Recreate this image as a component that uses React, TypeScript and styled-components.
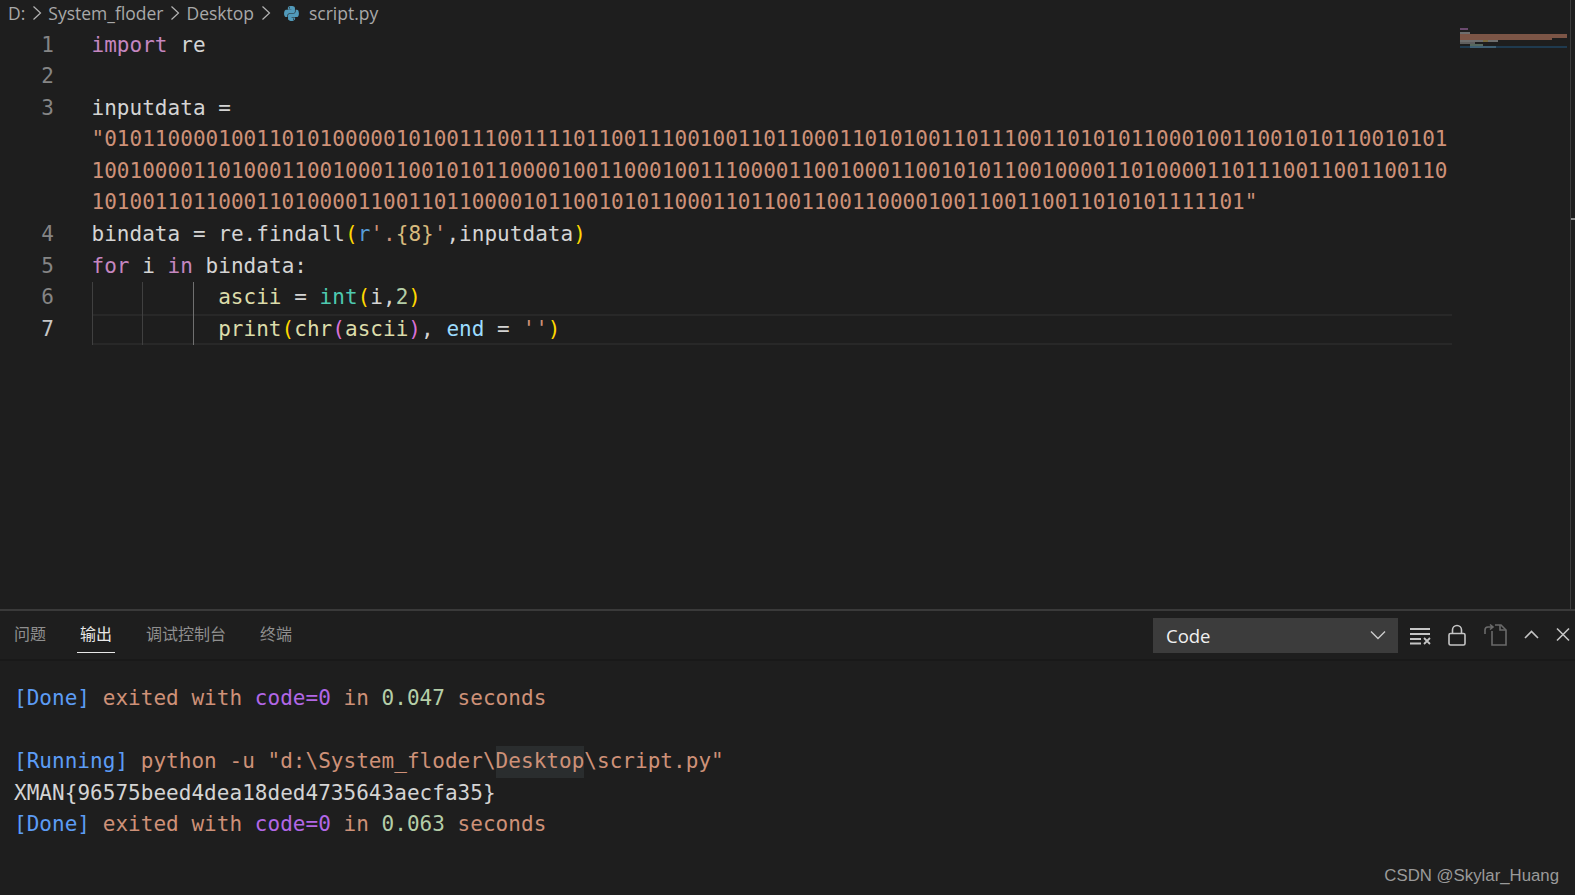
import React from "react";
import styled, { createGlobalStyle } from "styled-components";
import { FaPython } from "react-icons/fa";

const GlobalStyle = createGlobalStyle`
  html, body {
    margin: 0;
    padding: 0;
    background: #1e1e1e;
    overflow: hidden;
  }
`;

const monoFont = `"DejaVu Sans Mono", "Liberation Mono", monospace`;
const uiFont = `"Open Sans", "Noto Sans", sans-serif`;

const Page = styled.div`
  position: relative;
  width: 1575px;
  height: 895px;
  display: flex;
  flex-direction: column;
  background: #1e1e1e;
  overflow: hidden;
`;

const EditorArea = styled.div`
  height: 609px;
  display: flex;
  flex-shrink: 0;
`;

const EditorMain = styled.div`
  width: 1452px;
  flex-shrink: 0;
`;

const Breadcrumbs = styled.div`
  height: 26px;
  margin-bottom: 3.5px;
  display: flex;
  align-items: center;
  padding-left: 8px;
  font-family: ${uiFont};
  font-size: 17.5px;
  color: #a9a9a9;
`;

const Crumb = styled.span``;

const CrumbArrow = styled.svg`
  width: 10px;
  height: 16px;
  margin-left: 7px;
  margin-right: 6px;
  fill: none;
  stroke: #b4b4b4;
  stroke-width: 1.2;
`;

const PythonIcon = styled(FaPython)`
  width: 17px;
  height: 17px;
  margin-left: 6px;
  margin-right: 9px;
  color: #519aba;
`;

const Row = styled.div`
  display: flex;
  min-height: 31.6px;
  line-height: 31.6px;
  font-family: ${monoFont};
  font-size: 21px;
  letter-spacing: 0.03px;
  white-space: pre;
  color: #d4d4d4;
`;

const LineNumber = styled.div<{ $active?: boolean }>`
  width: 54px;
  margin-right: 37.5px;
  flex-shrink: 0;
  text-align: right;
  color: ${(p) => (p.$active ? "#c6c6c6" : "#858585")};
`;

const Code = styled.div`
  display: flex;
  flex-direction: column;
`;

const Indented = styled.div<{ $active?: boolean }>`
  display: flex;
  flex: 1;
  box-shadow: ${(p) =>
    p.$active ? "inset 0 2px 0 #282828, inset 0 -2px 0 #282828" : "none"};
`;

const IndentGuide = styled.div<{ $chars: number }>`
  box-sizing: border-box;
  width: ${(p) => p.$chars * 12.67}px;
  border-left: 1px solid #404040;
`;

const LastGuide = styled(IndentGuide)`
  border-left-color: #707070;
`;

const Tok = styled.span<{ $c: string }>`
  color: ${(p) => p.$c};
`;

const Minimap = styled.svg`
  width: 118px;
  height: 40px;
  flex-shrink: 0;
  margin-top: 20px;
`;

const ScrollTrack = styled.div`
  flex: 1;
  border-left: 1px solid #3c3c3c;
  padding-top: 218px;
`;

const ScrollMark = styled.div`
  height: 2px;
  background: #8c8c8c;
`;

const Panel = styled.div`
  flex: 1;
  display: flex;
  flex-direction: column;
  border-top: 2px solid #3a3a3a;
`;

const PanelHeader = styled.div`
  height: 48px;
  display: flex;
  align-items: center;
  justify-content: space-between;
  border-bottom: 2px solid #191919;
`;

const Tabs = styled.div`
  display: flex;
  align-items: stretch;
  box-sizing: border-box;
  height: 100%;
  padding-left: 14px;
  padding-bottom: 4px;
  gap: 34px;
`;

const Tab = styled.div<{ $active?: boolean }>`
  display: flex;
  align-items: center;
  font-family: "Noto Sans CJK SC", sans-serif;
  font-size: 16px;
  color: ${(p) => (p.$active ? "#e7e7e7" : "#8f8f8f")};
  position: relative;

  ${(p) =>
    p.$active &&
    `&::after {
      content: "";
      position: absolute;
      left: -3px;
      right: -3px;
      bottom: 2px;
      height: 1px;
      background: #e7e7e7;
    }`}
`;

const Actions = styled.div`
  display: flex;
  align-items: center;
  height: 100%;
`;

const Select = styled.div`
  box-sizing: border-box;
  width: 245px;
  height: 35px;
  display: flex;
  align-items: center;
  justify-content: space-between;
  padding: 0 12px 0 13px;
  background: #3c3c3c;
  font-family: ${uiFont};
  font-size: 18.5px;
  color: #f0f0f0;
`;

const ActionIcon = styled.svg<{ $w: number; $l: number; $dim?: boolean }>`
  width: ${(p) => p.$w}px;
  height: 24px;
  margin-left: ${(p) => p.$l}px;
  fill: none;
  stroke: ${(p) => (p.$dim ? "#6a6a6a" : "#c5c5c5")};
  stroke-width: 1.6;
  flex-shrink: 0;
`;

const CloseIcon = styled(ActionIcon)`
  margin-right: 5px;
`;

const Output = styled.div`
  padding-top: 22px;
  padding-left: 14px;
  font-family: ${monoFont};
  font-size: 21px;
  letter-spacing: 0.03px;
  white-space: pre;
  color: #d4d4d4;
`;

const OutputLine = styled.div`
  height: 31.6px;
  line-height: 31.6px;
`;

const Highlight = styled.span`
  display: inline-block;
  background: #2a2d2e;
`;

const Watermark = styled.div`
  position: absolute;
  right: 16px;
  bottom: 9px;
  font-family: "Liberation Sans", Arial, sans-serif;
  font-size: 16.8px;
  color: #9a9a9a;
`;

const C = {
  keyword: "#c586c0",
  string: "#ce9178",
  func: "#dcdcaa",
  type: "#4ec9b0",
  num: "#b5cea8",
  gold: "#ffd700",
  pink: "#da70d6",
  param: "#9cdcfe",
  blue: "#569cd6",
  regex: "#d7ba7d",
  log: "#5c9cf5",
  purple: "#b267e6",
};

const Chevron = () => (
  <CrumbArrow viewBox="0 0 10 16">
    <path d="M1.5 1.5 L8.5 8 L1.5 14.5" />
  </CrumbArrow>
);

const DoneLine = ({ time }: { time: string }) => (
  <OutputLine>
    <Tok $c={C.log}>[Done]</Tok>
    <Tok $c={C.string}> exited with </Tok>
    <Tok $c={C.purple}>code=0</Tok>
    <Tok $c={C.string}> in </Tok>
    <Tok $c={C.num}>{time}</Tok>
    <Tok $c={C.string}> seconds</Tok>
  </OutputLine>
);

const App = () => {
  return (
    <Page>
      <GlobalStyle />
      <EditorArea>
        <EditorMain>
          <Breadcrumbs>
            <Crumb>D:</Crumb>
            <Chevron />
            <Crumb>System_floder</Crumb>
            <Chevron />
            <Crumb>Desktop</Crumb>
            <Chevron />
            <PythonIcon />
            <Crumb>script.py</Crumb>
          </Breadcrumbs>

          <Row>
            <LineNumber>1</LineNumber>
            <Code>
              <div>
                <Tok $c={C.keyword}>import</Tok> re
              </div>
            </Code>
          </Row>
          <Row>
            <LineNumber>2</LineNumber>
          </Row>
          <Row>
            <LineNumber>3</LineNumber>
            <Code>
              <div>inputdata =</div>
              <Tok $c={C.string}>"0101100001001101010000010100111001111011001110010011011000110101001101110011010101100010011001010110010101</Tok>
              <Tok $c={C.string}>10010000110100011001000110010101100001001100010011100001100100011001010110010000110100001101110011001100110</Tok>
              <Tok $c={C.string}>1010011011000110100001100110110000101100101011000110110011001100001001100110011010101111101"</Tok>
            </Code>
          </Row>
          <Row>
            <LineNumber>4</LineNumber>
            <Code>
              <div>
                bindata = re.findall<Tok $c={C.gold}>(</Tok>
                <Tok $c={C.blue}>r</Tok>
                <Tok $c={C.string}>'.</Tok>
                <Tok $c={C.regex}>{"{8}"}</Tok>
                <Tok $c={C.string}>'</Tok>,inputdata
                <Tok $c={C.gold}>)</Tok>
              </div>
            </Code>
          </Row>
          <Row>
            <LineNumber>5</LineNumber>
            <Code>
              <div>
                <Tok $c={C.keyword}>for</Tok> i <Tok $c={C.keyword}>in</Tok> bindata:
              </div>
            </Code>
          </Row>
          <Row>
            <LineNumber>6</LineNumber>
            <Indented>
              <IndentGuide $chars={4} />
              <IndentGuide $chars={4} />
              <LastGuide $chars={2} />
              <div>
                <Tok $c={C.func}>ascii</Tok> = <Tok $c={C.type}>int</Tok>
                <Tok $c={C.gold}>(</Tok>i,<Tok $c={C.num}>2</Tok>
                <Tok $c={C.gold}>)</Tok>
              </div>
            </Indented>
          </Row>
          <Row>
            <LineNumber $active>7</LineNumber>
            <Indented $active>
              <IndentGuide $chars={4} />
              <IndentGuide $chars={4} />
              <LastGuide $chars={2} />
              <div>
                <Tok $c={C.func}>print</Tok>
                <Tok $c={C.gold}>(</Tok>
                <Tok $c={C.func}>chr</Tok>
                <Tok $c={C.pink}>(</Tok>
                <Tok $c={C.func}>ascii</Tok>
                <Tok $c={C.pink}>)</Tok>, <Tok $c={C.param}>end</Tok> ={" "}
                <Tok $c={C.string}>''</Tok>
                <Tok $c={C.gold}>)</Tok>
              </div>
            </Indented>
          </Row>
        </EditorMain>

        <Minimap viewBox="0 0 118 40">
          <rect x="8" y="8" width="8" height="2" fill="#6a4a6e" />
          <rect x="8" y="12" width="10" height="2" fill="#6e6e6e" />
          <rect x="8" y="14" width="107" height="2" fill="#7c5546" />
          <rect x="8" y="16" width="107" height="2" fill="#7c5546" />
          <rect x="8" y="18" width="92" height="2" fill="#7c5546" />
          <rect x="8" y="20" width="38" height="2" fill="#6e6e6e" />
          <rect x="31" y="20" width="5" height="2" fill="#7a6a3c" />
          <rect x="8" y="22" width="15" height="2" fill="#5e5e5e" />
          <rect x="18" y="24" width="13" height="2" fill="#56685e" />
          <rect x="8" y="26" width="107" height="2" fill="#1f3a4f" />
          <rect x="18" y="26" width="26" height="2" fill="#3f6074" />
        </Minimap>
        <ScrollTrack>
          <ScrollMark />
        </ScrollTrack>
      </EditorArea>

      <Panel>
        <PanelHeader>
          <Tabs>
            <Tab>问题</Tab>
            <Tab $active>输出</Tab>
            <Tab>调试控制台</Tab>
            <Tab>终端</Tab>
          </Tabs>
          <Actions>
            <Select>
              Code
              <svg width="16" height="10" viewBox="0 0 16 10" fill="none" stroke="#cccccc" strokeWidth="1.4">
                <path d="M1 1.5 L8 8.5 L15 1.5" />
              </svg>
            </Select>
            <ActionIcon $w={22} $l={11} viewBox="0 0 22 24">
              <path d="M1 6 H21 M1 11 H21 M1 16 H12 M1 20.5 H12" strokeWidth="1.8" />
              <path d="M15 15 L21 21 M21 15 L15 21" strokeWidth="1.8" />
            </ActionIcon>
            <ActionIcon $w={18} $l={17} viewBox="0 0 18 24">
              <rect x="1" y="10.5" width="16" height="11.5" rx="1.5" />
              <path d="M4.5 10.5 V7 a4.5 4.5 0 0 1 9 0 V10.5" />
            </ActionIcon>
            <ActionIcon $dim $w={23} $l={18} viewBox="0 0 23 24">
              <path d="M8 8 V22 H22 V7 L17 2 H11" />
              <path d="M16 2 V7 H22" />
              <path d="M1 11 V7 a3 3 0 0 1 3 -3 H9 M6 1.5 L9 4 L6 6.5" />
            </ActionIcon>
            <ActionIcon $w={15} $l={17} viewBox="0 0 15 24">
              <path d="M1 15 L7.5 8.5 L14 15" />
            </ActionIcon>
            <CloseIcon $w={14} $l={17} viewBox="0 0 14 24">
              <path d="M1 5.5 L13 17.5 M13 5.5 L1 17.5" />
            </CloseIcon>
          </Actions>
        </PanelHeader>
        <Output>
          <DoneLine time="0.047" />
          <OutputLine />
          <OutputLine>
            <Tok $c={C.log}>[Running]</Tok>
            <Tok $c={C.string}>
              {" "}python -u "d:\System_floder\<Highlight>Desktop</Highlight>\script.py"
            </Tok>
          </OutputLine>
          <OutputLine>XMAN{"{96575beed4dea18ded4735643aecfa35}"}</OutputLine>
          <DoneLine time="0.063" />
        </Output>
      </Panel>
      <Watermark>CSDN @Skylar_Huang</Watermark>
    </Page>
  );
};

export default App;
